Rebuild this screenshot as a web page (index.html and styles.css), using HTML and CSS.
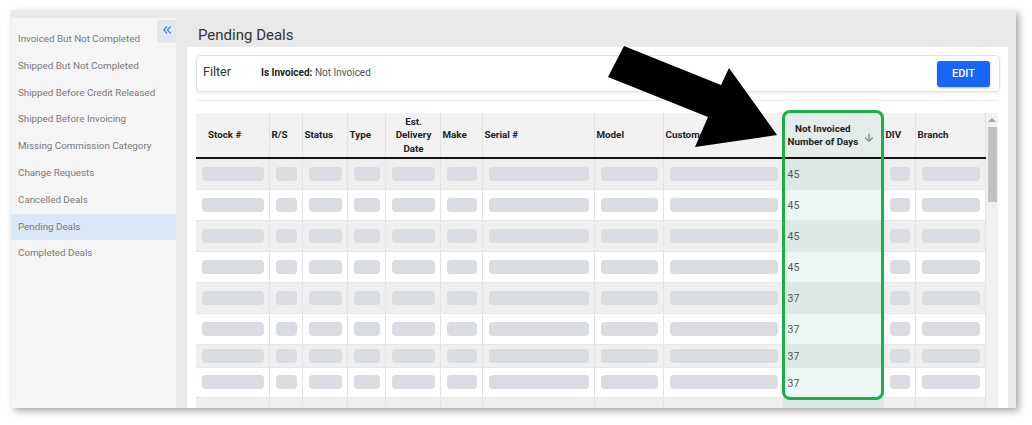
FILE: index.html
```html
<!DOCTYPE html>
<html lang="en">
<head>
    <meta charset="UTF-8">
    <title>Pending Deals</title>
    <link rel="stylesheet" href="styles.css">
</head>
<body>
    <div class="frame">
        <!-- Sidebar -->
        <aside class="sidebar">
            <div class="collapse">
                <svg width="10" height="10" viewBox="0 0 10 10"><path d="M5 1.5L1.8 5 5 8.5M8.6 1.5L5.4 5 8.6 8.5" fill="none" stroke="#3f7fe3" stroke-width="1.2"/></svg>
            </div>
            <div class="nav-item">Invoiced But Not Completed</div>
            <div class="nav-item">Shipped But Not Completed</div>
            <div class="nav-item">Shipped Before Credit Released</div>
            <div class="nav-item">Shipped Before Invoicing</div>
            <div class="nav-item">Missing Commission Category</div>
            <div class="nav-item">Change Requests</div>
            <div class="nav-item">Cancelled Deals</div>
            <div class="nav-item active">Pending Deals</div>
            <div class="nav-item">Completed Deals</div>
        </aside>

        <!-- Main -->
        <main class="main">
            <h1 class="page-title">Pending Deals</h1>
            <div class="panel">
                <div class="filter-card">
                    <span class="filter-label">Filter</span>
                    <span class="filter-value"><b>Is Invoiced:</b> Not Invoiced</span>
                    <button class="btn-edit">EDIT</button>
                </div>

                <div class="table-area">
                    <table class="deals">
                        <colgroup>
                            <col style="width:73px"><col style="width:33px"><col style="width:45px"><col style="width:38px">
                            <col style="width:55px"><col style="width:42px"><col style="width:112px"><col style="width:69px">
                            <col style="width:120px"><col style="width:100px"><col style="width:32px"><col style="width:70px">
                        </colgroup>
                        <thead>
                            <tr>
                                <th class="first">Stock #</th>
                                <th>R/S</th>
                                <th>Status</th>
                                <th>Type</th>
                                <th class="center">Est.<br>Delivery<br>Date</th>
                                <th>Make</th>
                                <th>Serial #</th>
                                <th>Model</th>
                                <th>Customer</th>
                                <th class="hl">
                                    <div class="sort-head">
                                        <span>Not Invoiced<br>Number of Days</span>
                                        <svg width="12" height="12" viewBox="0 0 24 24"><path d="M20 12l-1.41-1.41L13 16.17V4h-2v12.17l-5.58-5.59L4 12l8 8 8-8z" fill="#8f8f8f" stroke="#8f8f8f" stroke-width="1"/></svg>
                                    </div>
                                </th>
                                <th>DIV</th>
                                <th>Branch</th>
                            </tr>
                        </thead>
                        <tbody>
                            <tr><td><i></i></td><td><i></i></td><td><i></i></td><td><i></i></td><td><i></i></td><td><i></i></td><td><i></i></td><td><i></i></td><td><i></i></td><td class="hl">45</td><td><i></i></td><td><i></i></td></tr>
                            <tr><td><i></i></td><td><i></i></td><td><i></i></td><td><i></i></td><td><i></i></td><td><i></i></td><td><i></i></td><td><i></i></td><td><i></i></td><td class="hl">45</td><td><i></i></td><td><i></i></td></tr>
                            <tr><td><i></i></td><td><i></i></td><td><i></i></td><td><i></i></td><td><i></i></td><td><i></i></td><td><i></i></td><td><i></i></td><td><i></i></td><td class="hl">45</td><td><i></i></td><td><i></i></td></tr>
                            <tr><td><i></i></td><td><i></i></td><td><i></i></td><td><i></i></td><td><i></i></td><td><i></i></td><td><i></i></td><td><i></i></td><td><i></i></td><td class="hl">45</td><td><i></i></td><td><i></i></td></tr>
                            <tr><td><i></i></td><td><i></i></td><td><i></i></td><td><i></i></td><td><i></i></td><td><i></i></td><td><i></i></td><td><i></i></td><td><i></i></td><td class="hl">37</td><td><i></i></td><td><i></i></td></tr>
                            <tr><td><i></i></td><td><i></i></td><td><i></i></td><td><i></i></td><td><i></i></td><td><i></i></td><td><i></i></td><td><i></i></td><td><i></i></td><td class="hl">37</td><td><i></i></td><td><i></i></td></tr>
                            <tr class="short"><td><i></i></td><td><i></i></td><td><i></i></td><td><i></i></td><td><i></i></td><td><i></i></td><td><i></i></td><td><i></i></td><td><i></i></td><td class="hl">37</td><td><i></i></td><td><i></i></td></tr>
                            <tr class="mid"><td><i></i></td><td><i></i></td><td><i></i></td><td><i></i></td><td><i></i></td><td><i></i></td><td><i></i></td><td><i></i></td><td><i></i></td><td class="hl">37</td><td><i></i></td><td><i></i></td></tr>
                            <tr><td></td><td></td><td></td><td></td><td></td><td></td><td></td><td></td><td></td><td class="hl"></td><td></td><td></td></tr>
                        </tbody>
                    </table>
                    <div class="scrollbar">
                        <span class="scroll-up"></span>
                        <span class="scroll-thumb"></span>
                    </div>
                </div>
            </div>
        </main>
    </div>

    <!-- Annotations -->
    <div class="highlight-box"></div>
    <svg class="callout" width="1032" height="425" viewBox="0 0 1032 425">
        <polygon points="624,46 721,85 729,68 777,135 695,147 708,117 608,77" fill="#000"/>
    </svg>
</body>
</html>
```

FILE: styles.css
```css
* {
    box-sizing: border-box;
}

body {
    margin: 0;
    width: 1032px;
    height: 425px;
    overflow: hidden;
    position: relative;
    background-color: #fff;
    font-family: Roboto, "Liberation Sans", Arial, sans-serif;
    color: #333;
}

/* Window frame */
.frame {
    margin: 10px 0 0 11px;
    width: 1005px;
    height: 398px;
    padding-top: 8px;
    display: flex;
    overflow: hidden;
    background-color: #e9e9e9;
    box-shadow: 3px 3px 7px rgba(0, 0, 0, 0.35);
}

/* Sidebar */
.sidebar {
    width: 165px;
    flex: none;
    position: relative;
    padding-top: 8px;
    background-color: #f5f5f5;
}

.nav-item {
    height: 26.8px;
    line-height: 26.8px;
    padding-left: 7px;
    font-size: 9.8px;
    color: #7a7a7a;
    white-space: nowrap;
}

.nav-item.active {
    background-color: #dae7f5;
}

.collapse {
    position: absolute;
    top: 2px;
    right: 0;
    width: 19px;
    height: 23px;
    display: flex;
    align-items: center;
    justify-content: center;
    padding-bottom: 3px;
    background-color: #e3e8ef;
    border-radius: 3px 0 0 3px;
}

/* Main content */
.main {
    width: 821px;
    flex: none;
    margin-left: 11px;
    display: flex;
    flex-direction: column;
}

.page-title {
    margin: 0;
    height: 29px;
    padding: 6px 0 0 11px;
    font-size: 15px;
    line-height: 22px;
    font-weight: 400;
    color: #333;
}

.panel {
    flex: 1;
    overflow: hidden;
    padding: 8px 8px 0 9px;
    background-color: #fff;
}

/* Filter card */
.filter-card {
    height: 37px;
    display: flex;
    align-items: center;
    padding: 0 9px 0 6px;
    border: 1px solid #e2e2e2;
    border-radius: 4px;
    box-shadow: 0 1px 3px rgba(0, 0, 0, 0.08);
}

.filter-label {
    font-size: 12.5px;
    color: #333;
    margin-top: -4px;
    width: 58px;
}

.filter-value {
    font-size: 10px;
    color: #555;
    margin-top: -2px;
}

.filter-value b {
    color: #222;
}

.btn-edit {
    margin-left: auto;
    width: 53px;
    height: 26px;
    border: none;
    border-radius: 3px;
    background-color: #1766fb;
    color: #fff;
    font-family: inherit;
    font-size: 11px;
    font-weight: 500;
    box-shadow: 0 1px 2px rgba(0, 0, 0, 0.25);
}

/* Table */
.table-area {
    margin-top: 8px;
    padding-top: 12px;
    border-top: 1px solid #efefef;
    display: flex;
    width: 801px;
}

.deals {
    width: 789px;
    table-layout: fixed;
    border-collapse: collapse;
    font-size: 9.8px;
}

.deals th {
    height: 45px;
    padding: 0 0 0 2px;
    text-align: left;
    font-weight: 700;
    color: #222;
    line-height: 13.5px;
    white-space: nowrap;
    background-color: #f2f2f2;
    border-right: 1px solid #e2e2e2;
    border-bottom: 2px solid #111;
}

.deals th.first {
    padding-left: 12px;
}

.deals th.center {
    text-align: center;
}

.deals th.hl {
    background-color: #e3ece9;
}

.sort-head {
    display: flex;
    align-items: center;
    gap: 5px;
    padding-left: 2px;
}

.sort-head span {
    text-align: center;
}

.sort-head svg {
    margin-top: 5px;
}

.deals td {
    height: 31px;
    padding: 0 5px 0 6px;
    border-right: 1px solid #e4e4e4;
    border-bottom: 1px solid #e6e6e6;
}

.deals tr.short td {
    height: 23px;
}

.deals tr.mid td {
    height: 30px;
}

.deals tbody tr:nth-child(odd) {
    background-color: #efefef;
}

.deals td i {
    display: block;
    height: 14px;
    border-radius: 4px;
    background-color: #d9dce1;
}

.deals td.hl {
    padding: 2px 0 0 4px;
    font-size: 10.5px;
    color: #555;
    background-color: #ecf7f4;
}

.deals tbody tr:nth-child(odd) td.hl {
    background-color: #dde8e4;
}

.scrollbar {
    width: 12px;
    flex: none;
    position: relative;
    background-color: #f1f1f1;
}

.scroll-up {
    position: absolute;
    top: 5px;
    left: 2px;
    border-left: 4px solid transparent;
    border-right: 4px solid transparent;
    border-bottom: 4px solid #a3a3a3;
}

.scroll-thumb {
    position: absolute;
    top: 14px;
    left: 2px;
    width: 9px;
    height: 75px;
    background-color: #c1c1c1;
}

/* Annotations over the screenshot */
.highlight-box {
    position: absolute;
    left: 782px;
    top: 110px;
    width: 102px;
    height: 290px;
    border: 3px solid #16b14b;
    border-radius: 8px;
}

.callout {
    position: absolute;
    left: 0;
    top: 0;
    pointer-events: none;
}
```
